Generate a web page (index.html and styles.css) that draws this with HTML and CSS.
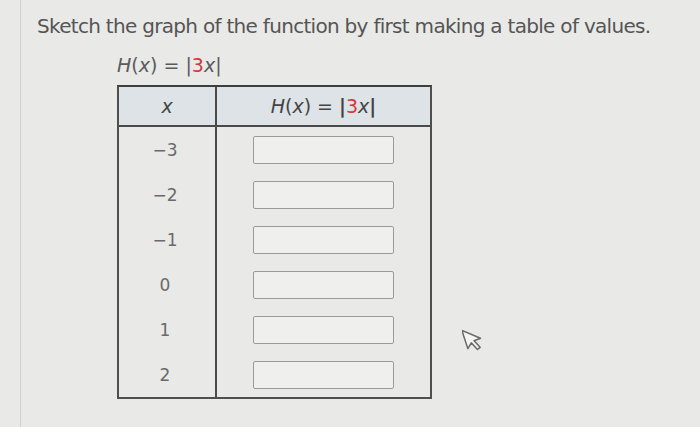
FILE: index.html
```html
<!DOCTYPE html>
<html>
<head>
<meta charset="utf-8">
<link rel="stylesheet" href="styles.css">
</head>
<body>
<div class="page">
  <div class="content">
    <p class="prompt">Sketch the graph of the function by first making a table of values.</p>
    <p class="formula"><i>H</i>(<i>x</i>)&nbsp;=&nbsp;|<span class="red">3</span><i>x</i>|</p>
    <div class="table">
      <div class="head c1"><i>x</i></div>
      <div class="head c2"><i>H</i>(<i>x</i>)&nbsp;=&nbsp;<b>|</b><span class="red">3</span><i>x</i><b>|</b></div>
      <div class="cell c1">−3</div><div class="cell c2"><span class="box"></span></div>
      <div class="cell c1">−2</div><div class="cell c2"><span class="box"></span></div>
      <div class="cell c1">−1</div><div class="cell c2"><span class="box"></span></div>
      <div class="cell c1">0</div><div class="cell c2"><span class="box"></span></div>
      <div class="cell c1">1</div><div class="cell c2"><span class="box"></span></div>
      <div class="cell c1">2</div><div class="cell c2"><span class="box"></span></div>
    </div>
  </div>
  <svg class="cursor" width="24" height="28" viewBox="0 0 18 22">
    <path d="M2 2 L2 17 L6 13.5 L9 20 L11.5 19 L8.6 12.6 L14 12.3 Z" fill="#f4f4f2" stroke="#6a6a6a" stroke-width="1.2" stroke-linejoin="round" transform="rotate(-18 8 11)"/>
  </svg>
</div>
</body>
</html>
```

FILE: styles.css
```css
html, body {
  margin: 0;
  padding: 0;
}
body {
  background: #e9e9e7;
  font-family: "DejaVu Sans", Verdana, sans-serif;
  color: #555;
  width: 700px;
  height: 427px;
  overflow: hidden;
}
.page {
  position: relative;
  height: 427px;
  margin-left: 20px;
  border-left: 1px solid #d2d2d0;
}
.content {
  padding: 14px 0 0 16px;
}
.prompt {
  margin: 0;
  font-size: 20px;
  letter-spacing: -0.7px;
  line-height: 24px;
  color: #555;
}
.formula {
  margin: 16px 0 0 80px;
  font-size: 19px;
  line-height: 22px;
  color: #5a5a5a;
}
.red {
  color: #d23a3a;
}
.table {
  margin: 9px 0 0 80px;
  width: 311px;
  display: grid;
  grid-template-columns: 98px 1fr;
  border: 2px solid #4f4f4f;
  border-top-color: #3e3e3e;
}
.head {
  height: 38px;
  background: #dde3e6;
  border-bottom: 2px solid #4a4a4a;
  display: flex;
  align-items: center;
  justify-content: center;
  font-size: 19px;
  color: #444;
}
.head b {
  font-weight: bold;
}
.c1 {
  border-right: 2px solid #4a4a4a;
}
.cell {
  height: 45px;
  display: flex;
  align-items: center;
  justify-content: center;
  font-size: 17px;
  color: #6a6a6a;
}
.cell.c1 {
  padding-right: 4px;
}
.box {
  width: 139px;
  height: 26px;
  border: 1.5px solid #9a9a9a;
  border-radius: 2px;
  background: #efefed;
}
.cursor {
  position: absolute;
  left: 441px;
  top: 325px;
}
```
